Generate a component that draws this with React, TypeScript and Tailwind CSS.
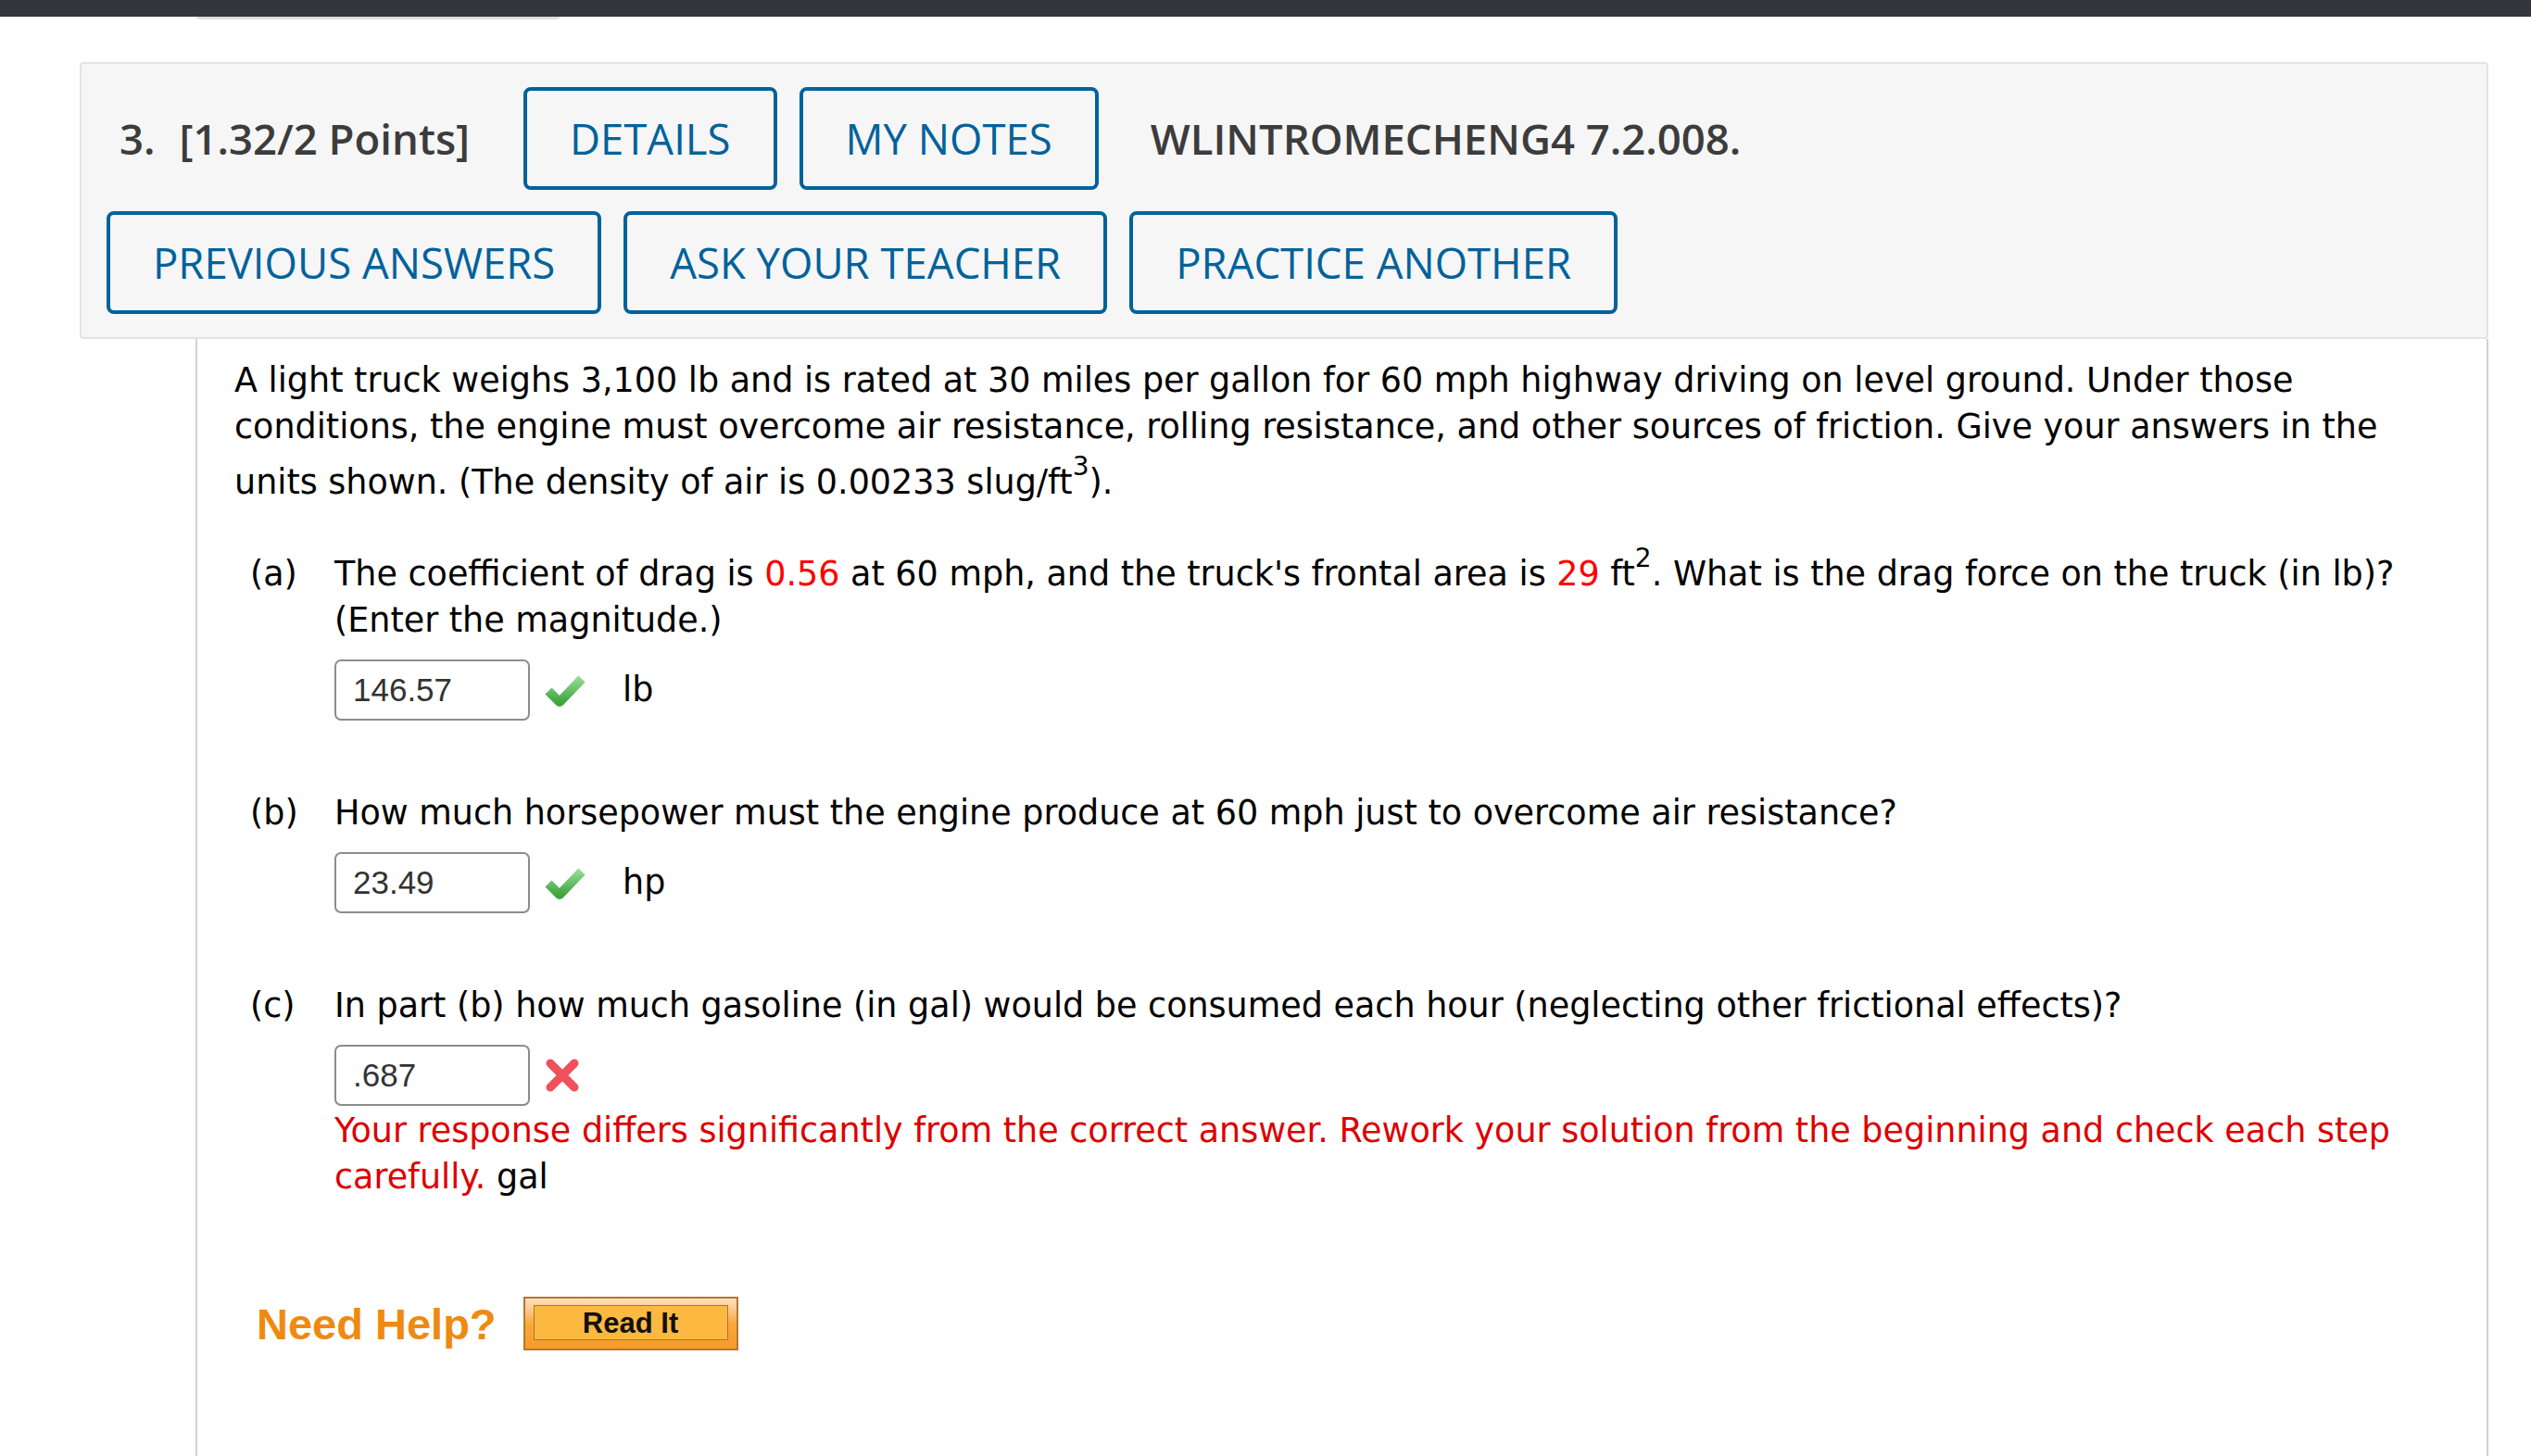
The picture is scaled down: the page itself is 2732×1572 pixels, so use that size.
import type { ReactNode } from 'react';

function PanelButton({ children }: { children: ReactNode }) {
  return (
    <button
      type="button"
      className="flex h-[111px] shrink-0 items-center rounded-[8px] border-[4px] border-[#00629b] bg-[#f6f6f6] px-[46px] text-[45.5px] leading-none text-[#00629b]"
    >
      {children}
    </button>
  );
}

function CheckIcon() {
  return (
    <svg width="44" height="36" viewBox="0 0 44 36" className="shrink-0">
      <defs>
        <linearGradient id="ok" x1="0" y1="0" x2="0" y2="1">
          <stop offset="0" stopColor="#8fd98f" />
          <stop offset="1" stopColor="#3fa53f" />
        </linearGradient>
      </defs>
      <path d="M4 19 L16 31 L40 6" fill="none" stroke="url(#ok)" strokeWidth="10" strokeLinejoin="round" />
    </svg>
  );
}

function CrossIcon() {
  return (
    <svg width="38" height="36" viewBox="0 0 38 36" className="shrink-0">
      <path d="M6 5 L32 31 M32 5 L6 31" stroke="#f0505a" strokeWidth="9" strokeLinecap="round" />
    </svg>
  );
}

function Answer({ value, ok, unit }: { value: string; ok: boolean; unit?: string }) {
  return (
    <div className="mt-[17px] flex items-baseline">
      <input
        readOnly
        value={value}
        className="h-[66px] w-[211px] rounded-[7px] border-2 border-[#8c8c8c] bg-white px-[18px] font-['Liberation_Sans',Arial,sans-serif] text-[35px] text-[#333]"
      />
      <div className="ml-[16px] self-center">{ok ? <CheckIcon /> : <CrossIcon />}</div>
      {unit && <span className="ml-[40px]">{unit}</span>}
    </div>
  );
}

// keeps the browser's super offset (which grows the line box) and nudges the glyph a bit higher
function Sup({ children }: { children: ReactNode }) {
  return <sup className="top-[-7px] align-super text-[28px] leading-[50px]">{children}</sup>;
}

function Part({ label, children, className }: { label: string; children: ReactNode; className: string }) {
  return (
    <div className={`flex items-baseline pl-[17px] ${className}`}>
      <div className="w-[91px] shrink-0">{label}</div>
      <div className="min-w-0 flex-1">{children}</div>
    </div>
  );
}

export default function App() {
  return (
    <div className="flex h-[1572px] flex-col overflow-hidden bg-white">
      <div className="h-[18px] bg-[#33363a]" />
      <div className="ml-[212px] h-[3px] w-[392px] rounded-b bg-[#dedede]" />

      <div className="ml-[86px] mt-[46px] w-[2600px] rounded-[4px] border-2 border-[#e3e3e3] bg-[#f6f6f6] pb-[25px] pt-[25px] font-['Open_Sans',sans-serif]">
        <div className="flex items-center pl-[41px] font-semibold text-[#3c3c3c]">
          <span className="text-[45.5px] leading-none">3.</span>
          <span className="ml-[26px] text-[45.5px] leading-none">[1.32/2 Points]</span>
          <div className="ml-[58px] flex gap-[24px] font-normal">
            <PanelButton>DETAILS</PanelButton>
            <PanelButton>MY NOTES</PanelButton>
          </div>
          <span className="ml-[56px] text-[45.5px] leading-none">WLINTROMECHENG4 7.2.008.</span>
        </div>
        <div className="mt-[23px] flex gap-[24px] pl-[27px]">
          <PanelButton>PREVIOUS ANSWERS</PanelButton>
          <PanelButton>ASK YOUR TEACHER</PanelButton>
          <PanelButton>PRACTICE ANOTHER</PanelButton>
        </div>
      </div>

      <div className="ml-[211px] w-[2475px] flex-1 border-x-2 border-[#d2d2d2] px-[40px] pt-[20px] font-['DejaVu_Sans',Verdana,sans-serif] text-[36.5px] leading-[50px] text-black">
        <p>
          A light truck weighs 3,100 lb and is rated at 30 miles per gallon for 60 mph highway driving on level
          ground. Under those conditions, the engine must overcome air resistance, rolling resistance, and other
          sources of friction. Give your answers in the units shown. (The density of air is 0.00233 slug/ft
          <Sup>3</Sup>).
        </p>

        <Part label="(a)" className="mt-[39px]">
          <p>
            The coefficient of drag is <span className="text-[#f00]">0.56</span> at 60 mph, and the truck's frontal
            area is <span className="text-[#f00]">29</span> ft<Sup>2</Sup>. What is the drag force on the truck (in
            lb)? (Enter the magnitude.)
          </p>
          <Answer value="146.57" ok unit="lb" />
        </Part>

        <Part label="(b)" className="mt-[75px]">
          <p>How much horsepower must the engine produce at 60 mph just to overcome air resistance?</p>
          <Answer value="23.49" ok unit="hp" />
        </Part>

        <Part label="(c)" className="mt-[75px]">
          <p>In part (b) how much gasoline (in gal) would be consumed each hour (neglecting other frictional effects)?</p>
          <Answer value=".687" ok={false} />
          <p className="mt-[2px]">
            <span className="text-[#dd0000]">
              Your response differs significantly from the correct answer. Rework your solution from the beginning and
              check each step carefully.
            </span>{' '}
            gal
          </p>
        </Part>

        <div className="mt-[104px] flex items-center pl-[24px]">
          <span className="font-['Liberation_Sans',Arial,sans-serif] text-[47px] font-bold leading-none text-[#ef8a10]">
            Need Help?
          </span>
          <button
            type="button"
            className="ml-[29px] border-2 border-[#b47632] bg-gradient-to-b from-[#fde2c0] via-[#f9a83a] to-[#f59a28] px-[9px] pb-[9px] pt-[7px]"
          >
            <span className="flex h-[38px] w-[210px] items-center justify-center border border-[#b0742c] bg-[#fbb941] font-['Liberation_Sans',Arial,sans-serif] text-[31px] font-bold leading-none text-[#111]">
              Read It
            </span>
          </button>
        </div>
      </div>
    </div>
  );
}
